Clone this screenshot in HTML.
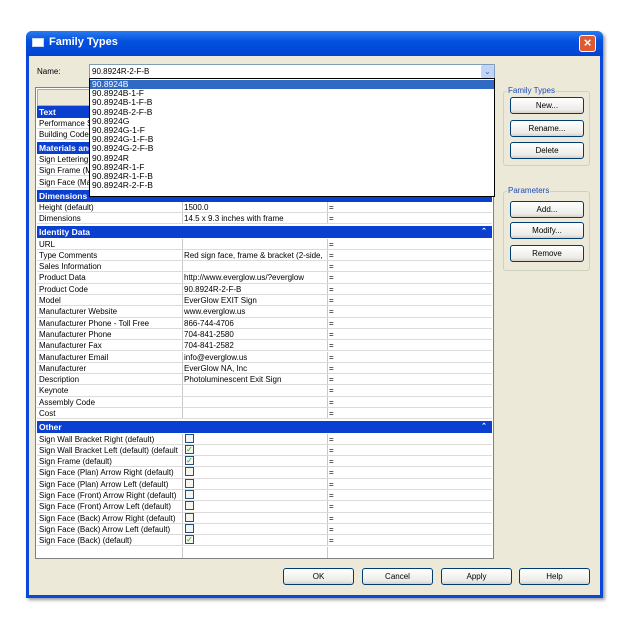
<!DOCTYPE html>
<html><head><meta charset="utf-8"><style>
*{margin:0;padding:0;box-sizing:border-box}
body{width:635px;height:635px;background:#fff;position:relative;overflow:hidden;font-family:"Liberation Sans",Tahoma,sans-serif;font-size:8px;color:#000}
.a{position:absolute}
.win{left:26px;top:31px;width:577px;height:567px;background:#0a48d8;border-radius:6px 6px 0 0;box-shadow:2px 2px 3px #999}
.title{left:26px;top:31px;width:577px;height:25px;background:linear-gradient(#2a7af0,#0452e0 40%,#0042d0);border-radius:6px 6px 0 0}
.body{left:29px;top:56px;width:571px;height:539px;background:#ece9d8}
.r{position:absolute;left:37px;width:455px;height:11.3px;border-bottom:1px solid #dcdcdc;background:#fff;line-height:11px;white-space:nowrap;overflow:hidden}
.r span{position:absolute;top:0}
.c1{left:2px;width:143px;overflow:hidden}
.c2{left:147px;width:143px;overflow:hidden}
.c3{left:292px}
.r:before,.r:after{content:"";position:absolute;top:0;bottom:-1px;border-left:1px solid #c8c8c8}
.r:before{left:145px}.r:after{left:290px}
.h{position:absolute;left:37px;width:455px;height:12px;background:#0a3fd0;color:#fff;font-weight:bold;font-size:8.5px;line-height:12px;padding-left:2px}
.h i{position:absolute;right:5px;font-style:normal;font-size:7px}
.btn{position:absolute;height:17px;border:1px solid #003c74;border-radius:3px;background:linear-gradient(#fff,#ecebe6 80%,#d6d0c5);text-align:center;line-height:15px;font-size:8px}
.grp{position:absolute;border:1px solid #d0d0bf;border-radius:3px}
.gl{position:absolute;background:#ece9d8;color:#1f4bb8;font-size:8px;padding:0 1px}
.cb{position:absolute;left:148px;top:1px;width:9px;height:9px;border:1px solid #1c5180;background:#f4f4f0;color:#21a121;font-size:8px;line-height:8px;text-align:center}
.dd{left:89px;top:78px;width:406px;height:119px;background:#fff;border:1px solid #000;line-height:9.1px;font-size:8.5px;padding-top:1px}
.dd div{padding-left:2px;height:9.2px}
</style></head><body>
<div class="a win"></div>
<div class="a title"></div>
<div class="a" style="left:32px;top:38px;width:12px;height:9px;background:#fff;border:1px solid #c8d8f8"></div>
<div class="a" style="left:49px;top:36px;color:#fff;font-weight:bold;font-size:11px">Family Types</div>
<div class="a" style="left:579px;top:35px;width:17px;height:17px;background:#e05a30;border:1px solid #fff;border-radius:3px;color:#fff;font-size:13px;line-height:14px;text-align:center;font-weight:bold">×</div>
<div class="a body"></div>
<div class="a" style="left:37px;top:67px">Name:</div>
<div class="a" style="left:89px;top:64px;width:406px;height:15px;background:#fff;border:1px solid #7f9db9;line-height:13px;padding-left:2px">90.8924R-2-F-B</div>
<div class="a" style="left:481px;top:65px;width:13px;height:13px;background:#c1d3fb;border-radius:2px;color:#4d6185;text-align:center;line-height:13px;font-size:8px">⌄</div>

<div class="a" style="left:35px;top:87px;width:459px;height:472px;border:1px solid #808080;background:#fff"></div>
<div class="a" style="left:37px;top:89px;width:455px;height:17px;background:#ece9d8;border:1px solid #aaa"></div>

<div class="h" style="top:106px">Text</div>
<div class="r" style="top:118px"><span class="c1">Performance Standard</span></div>
<div class="r" style="top:129px"><span class="c1">Building Codes</span></div>
<div class="h" style="top:142px">Materials and Finishes</div>
<div class="r" style="top:154px"><span class="c1">Sign Lettering</span></div>
<div class="r" style="top:165px"><span class="c1">Sign Frame (Material)</span></div>
<div class="r" style="top:177px"><span class="c1">Sign Face (Material)</span></div>
<div class="h" style="top:190px">Dimensions<i>⌃</i></div>
<div class="r" style="top:202px"><span class="c1">Height (default)</span><span class="c2">1500.0</span><span class="c3">=</span></div>
<div class="r" style="top:213px"><span class="c1">Dimensions</span><span class="c2">14.5 x 9.3 inches with frame</span><span class="c3">=</span></div>
<div class="h" style="top:226px">Identity Data<i>⌃</i></div>
<div class="r" style="top:238.5px"><span class="c1">URL</span><span class="c3">=</span></div>
<div class="r" style="top:249.8px"><span class="c1">Type Comments</span><span class="c2">Red sign face, frame &amp; bracket (2-side,</span><span class="c3">=</span></div>
<div class="r" style="top:261.1px"><span class="c1">Sales Information</span><span class="c3">=</span></div>
<div class="r" style="top:272.4px"><span class="c1">Product Data</span><span class="c2">http://www.everglow.us/?everglow</span><span class="c3">=</span></div>
<div class="r" style="top:283.7px"><span class="c1">Product Code</span><span class="c2">90.8924R-2-F-B</span><span class="c3">=</span></div>
<div class="r" style="top:295px"><span class="c1">Model</span><span class="c2">EverGlow EXIT Sign</span><span class="c3">=</span></div>
<div class="r" style="top:306.3px"><span class="c1">Manufacturer Website</span><span class="c2">www.everglow.us</span><span class="c3">=</span></div>
<div class="r" style="top:317.6px"><span class="c1">Manufacturer Phone - Toll Free</span><span class="c2">866-744-4706</span><span class="c3">=</span></div>
<div class="r" style="top:328.9px"><span class="c1">Manufacturer Phone</span><span class="c2">704-841-2580</span><span class="c3">=</span></div>
<div class="r" style="top:340.2px"><span class="c1">Manufacturer Fax</span><span class="c2">704-841-2582</span><span class="c3">=</span></div>
<div class="r" style="top:351.5px"><span class="c1">Manufacturer Email</span><span class="c2">info@everglow.us</span><span class="c3">=</span></div>
<div class="r" style="top:362.8px"><span class="c1">Manufacturer</span><span class="c2">EverGlow NA, Inc</span><span class="c3">=</span></div>
<div class="r" style="top:374.1px"><span class="c1">Description</span><span class="c2">Photoluminescent Exit Sign</span><span class="c3">=</span></div>
<div class="r" style="top:385.4px"><span class="c1">Keynote</span><span class="c3">=</span></div>
<div class="r" style="top:396.7px"><span class="c1">Assembly Code</span><span class="c3">=</span></div>
<div class="r" style="top:408px"><span class="c1">Cost</span><span class="c3">=</span></div>
<div class="h" style="top:421px">Other<i>⌃</i></div>
<div class="r" style="top:433.5px"><span class="c1">Sign Wall Bracket Right (default)</span><span class="cb"></span><span class="c3">=</span></div>
<div class="r" style="top:444.8px"><span class="c1">Sign Wall Bracket Left (default) (default</span><span class="cb">✓</span><span class="c3">=</span></div>
<div class="r" style="top:456.1px"><span class="c1">Sign Frame (default)</span><span class="cb">✓</span><span class="c3">=</span></div>
<div class="r" style="top:467.4px"><span class="c1">Sign Face (Plan) Arrow Right (default)</span><span class="cb"></span><span class="c3">=</span></div>
<div class="r" style="top:478.7px"><span class="c1">Sign Face (Plan) Arrow Left (default)</span><span class="cb"></span><span class="c3">=</span></div>
<div class="r" style="top:490px"><span class="c1">Sign Face (Front) Arrow Right (default)</span><span class="cb"></span><span class="c3">=</span></div>
<div class="r" style="top:501.3px"><span class="c1">Sign Face (Front) Arrow Left (default)</span><span class="cb"></span><span class="c3">=</span></div>
<div class="r" style="top:512.6px"><span class="c1">Sign Face (Back) Arrow Right (default)</span><span class="cb"></span><span class="c3">=</span></div>
<div class="r" style="top:523.9px"><span class="c1">Sign Face (Back) Arrow Left (default)</span><span class="cb"></span><span class="c3">=</span></div>
<div class="r" style="top:535.2px"><span class="c1">Sign Face (Back) (default)</span><span class="cb">✓</span><span class="c3">=</span></div>
<div class="r" style="top:546.5px;height:11px;border-bottom:none"></div>

<div class="a dd">
<div style="background:#316ac5;color:#fff">90.8924B</div>
<div>90.8924B-1-F</div><div>90.8924B-1-F-B</div><div>90.8924B-2-F-B</div>
<div>90.8924G</div><div>90.8924G-1-F</div><div>90.8924G-1-F-B</div><div>90.8924G-2-F-B</div>
<div>90.8924R</div><div>90.8924R-1-F</div><div>90.8924R-1-F-B</div><div>90.8924R-2-F-B</div>
</div>

<div class="grp" style="left:503px;top:91px;width:87px;height:75px"></div>
<div class="gl" style="left:507px;top:86px">Family Types</div>
<div class="btn" style="left:510px;top:97px;width:74px">New...</div>
<div class="btn" style="left:510px;top:120px;width:74px">Rename...</div>
<div class="btn" style="left:510px;top:142px;width:74px">Delete</div>
<div class="grp" style="left:503px;top:191px;width:87px;height:80px"></div>
<div class="gl" style="left:507px;top:186px">Parameters</div>
<div class="btn" style="left:510px;top:201px;width:74px">Add...</div>
<div class="btn" style="left:510px;top:222px;width:74px">Modify...</div>
<div class="btn" style="left:510px;top:245px;width:74px">Remove</div>

<div class="btn" style="left:283px;top:568px;width:71px">OK</div>
<div class="btn" style="left:362px;top:568px;width:71px">Cancel</div>
<div class="btn" style="left:441px;top:568px;width:71px">Apply</div>
<div class="btn" style="left:519px;top:568px;width:71px">Help</div>
</body></html>
